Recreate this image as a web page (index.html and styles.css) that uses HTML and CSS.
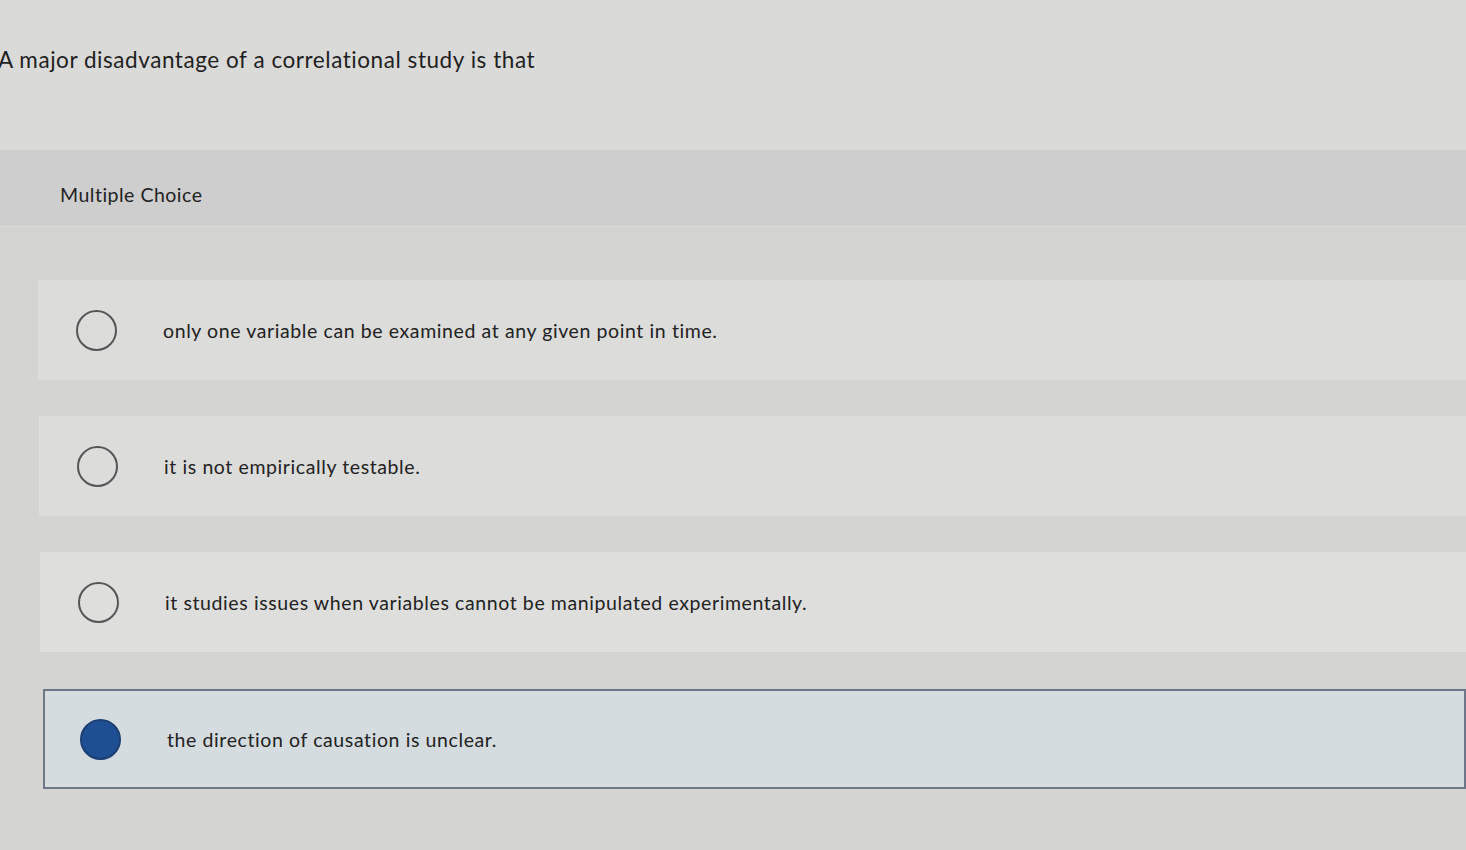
FILE: index.html
```html
<!DOCTYPE html>
<html>
<head>
<meta charset="utf-8">
<link rel="stylesheet" href="styles.css">
</head>
<body>
<div class="page">
  <div class="question">A major disadvantage of a correlational study is that</div>
  <div class="mc-band"><span class="mc-label">Multiple Choice</span></div>
  <div class="options">
    <div class="option">
      <span class="radio"></span>
      <span class="opt-text">only one variable can be examined at any given point in time.</span>
    </div>
    <div class="option">
      <span class="radio"></span>
      <span class="opt-text">it is not empirically testable.</span>
    </div>
    <div class="option">
      <span class="radio"></span>
      <span class="opt-text">it studies issues when variables cannot be manipulated experimentally.</span>
    </div>
    <div class="option selected">
      <span class="radio filled"></span>
      <span class="opt-text">the direction of causation is unclear.</span>
    </div>
  </div>
</div>
</body>
</html>
```
FILE: styles.css
```css
html, body {
  margin: 0;
  padding: 0;
}
body {
  background: #d4d4d3;
  font-family: Lato, "Open Sans", sans-serif;
  color: #222;
  overflow: hidden;
  width: 1466px;
  height: 850px;
}
.page {
  display: flex;
  flex-direction: column;
}
.question {
  background: #dadad9;
  height: 150px;
  box-sizing: border-box;
  padding: 46px 0 0 0;
  margin-left: -2px;
  font-size: 22.5px;
  letter-spacing: 0.55px;
  color: #1f1f1f;
}
.mc-band {
  background: #cecece;
  height: 75px;
  box-sizing: border-box;
  padding: 33px 0 0 60px;
}
.mc-label {
  font-size: 19.5px;
  letter-spacing: 0.5px;
  color: #222;
}
.options {
  display: flex;
  flex-direction: column;
  gap: 36px;
  padding: 55px 0 0 38px;
}
.option {
  height: 100px;
  box-sizing: border-box;
  background: #dcdcdb;
  display: flex;
  align-items: center;
  padding-left: 38px;
  gap: 46px;
}
.option:nth-child(2) { margin-left: 1px; }
.option:nth-child(3) { margin-left: 2px; background: #dededd; }
.radio {
  width: 41px;
  height: 41px;
  box-sizing: border-box;
  border: 2px solid #555;
  border-radius: 50%;
  flex: none;
}
.radio.filled {
  background: #1f4f93;
  border-color: #1b3f72;
}
.opt-text {
  font-size: 19.5px;
  letter-spacing: 0.6px;
  color: #222;
}
.option.selected {
  margin-left: 5px;
  margin-top: 1px;
  background: #d4dcdf;
  border: 2px solid #6d7787;
  padding-left: 35px;
}
```
